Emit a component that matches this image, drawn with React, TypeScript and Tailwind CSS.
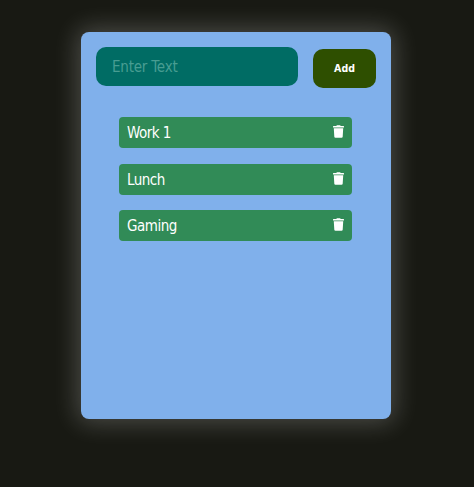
import { FaTrash } from "react-icons/fa";

const items = ["Work 1", "Lunch", "Gaming"];

export default function App() {
  return (
    <div className="h-[487px] bg-[#181913] pt-8 font-['DejaVu_Sans',sans-serif] font-stretch-condensed">
      <div className="mx-auto h-[387px] w-[310px] translate-x-[-1px] rounded-[8px] bg-[#80b0eb] shadow-[0_0_24px_4px_rgba(255,255,255,0.22)]">
        <div className="flex items-start pl-[15px] pt-[15px]">
          <div className="flex h-[39px] w-[202px] items-center rounded-[10px] bg-[#006c64] pl-4 pt-[2px] text-[15px] tracking-[-0.2px] text-[#489d92]">
            Enter Text
          </div>
          <button className="ml-[15px] mt-[2px] flex h-[39px] w-[63px] items-center justify-center rounded-[10px] bg-[#2e4f00] text-[10.5px] font-bold font-stretch-condensed text-white">
            Add
          </button>
        </div>
        <ul className="ml-[38px] mt-[29px] flex w-[233px] flex-col gap-[15.5px]">
          {items.map((t) => (
            <li key={t} className="flex h-[31px] items-center justify-between rounded-[4px] bg-[#318b57] px-[8px] text-[15px] tracking-[-0.5px] text-white">
              <span className="pt-[2px]">{t}</span>
              <FaTrash className="mb-[2px] h-[13px] w-[11px]" />
            </li>
          ))}
        </ul>
      </div>
    </div>
  );
}
